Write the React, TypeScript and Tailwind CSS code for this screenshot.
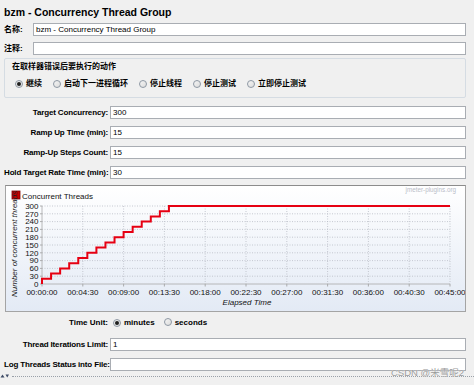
import React from 'react'

const font = { fontFamily: '"Liberation Sans", "Noto Sans CJK SC", Arial, sans-serif' }

function Radio({ checked }: { checked?: boolean }) {
  return (
    <span className="relative inline-flex h-[8px] w-[8px] shrink-0 items-center justify-center rounded-full border border-[#8e98a4] bg-gradient-to-br from-[#f4f4f4] to-[#dcdcdc]">
      {checked && <span className="h-[4px] w-[4px] rounded-full bg-[#1f1f1f]" />}
    </span>
  )
}

function Field({ label, value, top }: { label: string; value?: string; top: string }) {
  return (
    <div className={`flex h-[13px] items-center ${top}`}>
      <div className="w-[104px] whitespace-nowrap text-right text-[8px] font-bold leading-none tracking-[-0.15px] text-black">{label}</div>
      <div className="ml-[2px] flex h-[13px] flex-1 items-center border border-[#a9adb3] bg-white pl-[2px] text-[8px] leading-none text-black">
        {value}
      </div>
    </div>
  )
}

function Chart() {
  const x0 = 42
  const x1 = 450
  const yB = 284
  const yT = 206
  const sy = (yB - yT) / 300
  const sx = (x1 - x0) / 45
  const yTicks = [0, 30, 60, 90, 120, 150, 180, 210, 240, 270, 300]
  const xLabels = ['00:00:00', '00:04:30', '00:09:00', '00:13:30', '00:18:00', '00:22:30', '00:27:00', '00:31:30', '00:36:00', '00:40:30', '00:45:00']

  let d = `M${x0},${yB} L${x0},${yB - 20 * sy}`
  for (let k = 1; k <= 14; k++) {
    const x = x0 + k * sx
    d += ` L${x},${yB - 20 * k * sy} L${x},${yB - 20 * (k + 1) * sy}`
  }
  d += ` L${x1},${yB - 300 * sy}`

  return (
    <div className="mt-[6px] ml-[1px] h-[127px] border border-[#a4a4a4] border-t-[#8c8c8c]">
      <svg width="459" height="125" viewBox="6 186 459 125" className="block">
        <defs>
          <linearGradient id="bg" x1="0" y1="0" x2="0" y2="1">
            <stop offset="0" stopColor="#ffffff" />
            <stop offset="1" stopColor="#e3eaf5" />
          </linearGradient>
          <clipPath id="yl">
            <rect x="0" y="191" width="30" height="120" />
          </clipPath>
        </defs>
        <rect x="6" y="186" width="459" height="125" fill="url(#bg)" />
        <rect x="12" y="191" width="8" height="8" fill="#c40000" stroke="#7a0000" strokeWidth="0.8" />
        <text x="22" y="198.5" fontSize="8" fill="#111" style={font}>Concurrent Threads</text>
        <text x="456" y="191.5" fontSize="6.3" fill="#b9bdc8" textAnchor="end" style={font}>jmeter-plugins.org</text>

        <g clipPath="url(#yl)">
          <text
            x="0"
            y="0"
            fontSize="8"
            fontStyle="italic"
            fill="#222"
            style={font}
            transform="translate(16.5,297) rotate(-90)"
          >
            Number of concurrent threads
          </text>
        </g>

        {yTicks.map((v) => {
          const y = yB - v * sy
          return (
            <g key={v}>
              {v > 0 && (
                <line x1={x0} x2={x1} y1={y} y2={y} stroke="#b9bdc5" strokeWidth="0.8" strokeDasharray="1 1.5" />
              )}
              <line x1={x0 - 2} x2={x0} y1={y} y2={y} stroke="#9a9a9a" strokeWidth="0.8" />
              <text x="38.5" y={y + 2.8} fontSize="8" fill="#111" textAnchor="end" style={font}>{v}</text>
            </g>
          )
        })}

        {xLabels.map((l, i) => {
          const x = x0 + i * 40.8
          return (
            <g key={l}>
              {i > 0 && (
                <line x1={x} x2={x} y1={yT} y2={yB} stroke="#b9bdc5" strokeWidth="0.8" strokeDasharray="1 1.5" />
              )}
              <line x1={x} x2={x} y1={yB} y2={yB + 2.5} stroke="#9a9a9a" strokeWidth="0.8" />
              <text x={x} y="295" fontSize="8" fill="#111" textAnchor="middle" style={font}>{l}</text>
            </g>
          )
        })}
        <line x1={x0} x2={x0} y1={yT} y2={yB} stroke="#a8a8a8" strokeWidth="0.8" />
        <line x1={x0} x2={x1} y1={yB} y2={yB} stroke="#a8a8a8" strokeWidth="0.8" />

        <path d={d} fill="none" stroke="#e60012" strokeWidth="2" />

        <text x="247" y="304.5" fontSize="8" fontStyle="italic" fill="#111" textAnchor="middle" style={font}>Elapsed Time</text>
      </svg>
    </div>
  )
}

export default function App() {
  return (
    <div className="relative h-[385px] w-[474px] overflow-hidden bg-[#f0f0f0] pl-[4px] pr-[8px] text-black" style={font}>
      <div className="pt-[5px] text-[10.5px] font-bold leading-[14px]">bzm - Concurrency Thread Group</div>

      <div className="mt-[4px] flex h-[13px] items-center">
        <div className="w-[29px] text-[8px] font-bold leading-none">名称:</div>
        <div className="flex h-[13px] flex-1 items-center border border-[#a9adb3] bg-white pl-[2px] text-[8px] leading-none">
          bzm - Concurrency Thread Group
        </div>
      </div>
      <div className="mt-[6px] flex h-[13px] items-center">
        <div className="w-[29px] text-[8px] font-bold leading-none">注释:</div>
        <div className="h-[13px] flex-1 border border-[#a9adb3] bg-white" />
      </div>

      <div className="mt-[3px] h-[40px] rounded-[2px] border border-[#d5dce3] pl-[7px]">
        <div className="pt-[3px] text-[8px] font-bold leading-[10px]">在取样器错误后要执行的动作</div>
        <div className="mt-[8px] flex items-center text-[8px] font-bold leading-none">
          <div className="ml-[3px] flex items-center gap-[3px]"><Radio checked /><span>继续</span></div>
          <div className="ml-[11px] flex items-center gap-[3px]"><Radio /><span>启动下一进程循环</span></div>
          <div className="ml-[11px] flex items-center gap-[3px]"><Radio /><span>停止线程</span></div>
          <div className="ml-[11px] flex items-center gap-[3px]"><Radio /><span>停止测试</span></div>
          <div className="ml-[11px] flex items-center gap-[3px]"><Radio /><span>立即停止测试</span></div>
        </div>
      </div>

      <Field label="Target Concurrency:" value="300" top="mt-[8px]" />
      <Field label="Ramp Up Time (min):" value="15" top="mt-[7px]" />
      <Field label="Ramp-Up Steps Count:" value="15" top="mt-[7px]" />
      <Field label="Hold Target Rate Time (min):" value="30" top="mt-[7px]" />

      <Chart />

      <div className="mt-[5px] flex h-[12px] items-center">
        <div className="w-[104px] whitespace-nowrap text-right text-[8px] font-bold leading-none">Time Unit:</div>
        <div className="ml-[5px] flex items-center gap-[3px] text-[8px] font-bold leading-none">
          <Radio checked />
          <span>minutes</span>
          <span className="ml-[6px]"><Radio /></span>
          <span>seconds</span>
        </div>
      </div>
      <Field label="Thread Iterations Limit:" value="1" top="mt-[9px]" />
      <Field label="Log Threads Status into File:" top="mt-[7px]" />

      <div className="absolute bottom-[6px] left-0 right-0 flex items-center">
        <svg width="10" height="6" viewBox="0 0 10 6" className="shrink-0">
          <path d="M0.5 4.5 L2.5 1.5 L4.5 4.5 Z" fill="#3d4a66" />
          <path d="M5.5 1.5 L9 1.5 L7.25 4.5 Z" fill="#3d4a66" />
        </svg>
        <div className="ml-[2px] h-0 flex-1 border-t border-dotted border-[#9aa0a8]" />
      </div>

      <div className="absolute left-[391px] top-[368px] text-[9.5px] leading-none text-[#9b9b9b] [text-shadow:0_0_1px_#fff]">
        CSDN @米雪呢2
      </div>
    </div>
  )
}
